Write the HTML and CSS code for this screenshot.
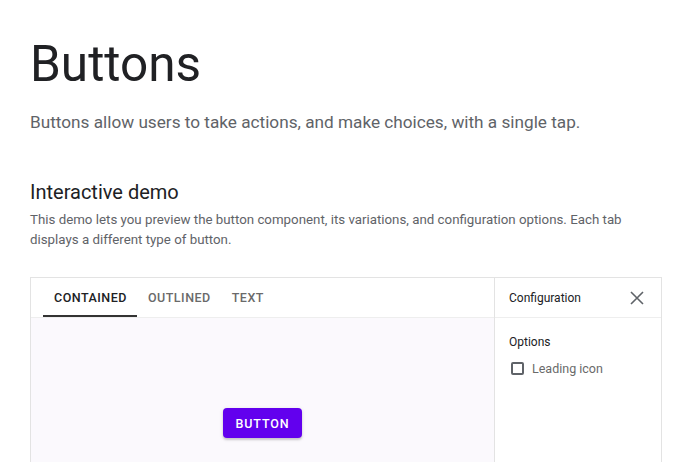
FILE: index.html
```html
<!DOCTYPE html>
<html lang="en">
<head>
<meta charset="utf-8">
<title>Buttons</title>
<link rel="stylesheet" href="styles.css">
</head>
<body>
<main class="page">
  <h1 class="title">Buttons</h1>
  <p class="lead">Buttons allow users to take actions, and make choices, with a single tap.</p>

  <h2 class="section-title">Interactive demo</h2>
  <p class="section-text">This demo lets you preview the button component, its variations, and configuration options. Each tab displays a different type of button.</p>

  <div class="demo">
    <div class="demo-main">
      <nav class="tabs">
        <span class="tab tab-active">Contained</span>
        <span class="tab">Outlined</span>
        <span class="tab">Text</span>
      </nav>
      <div class="stage">
        <button class="btn-contained" type="button">Button</button>
      </div>
    </div>
    <aside class="config">
      <div class="config-head">
        <span>Configuration</span>
        <svg class="close-icon" width="14" height="14" viewBox="0 0 14 14" aria-hidden="true">
          <path d="M1 1 L13 13 M13 1 L1 13" stroke="#5f6368" stroke-width="1.6" fill="none"/>
        </svg>
      </div>
      <div class="config-body">
        <div class="config-label">Options</div>
        <label class="check-row">
          <span class="checkbox"></span>
          <span class="check-text">Leading icon</span>
        </label>
      </div>
    </aside>
  </div>
</main>
</body>
</html>
```
FILE: styles.css
```css
* {
  box-sizing: border-box;
}

body {
  margin: 0;
  background: #ffffff;
  font-family: Roboto, "Liberation Sans", Arial, sans-serif;
  color: #202124;
}

.page {
  padding: 40px 31px 0 30px;
}

.title {
  margin: 0;
  font-size: 49.5px;
  font-weight: 400;
  line-height: 48px;
  color: #202124;
}

.lead {
  margin: 22px 0 0;
  font-size: 17.2px;
  line-height: 24px;
  color: #5f6368;
}

.section-title {
  margin: 44px 0 0;
  font-size: 20px;
  font-weight: 400;
  line-height: 28px;
  color: #202124;
}

.section-text {
  margin: 4px 0 0;
  font-size: 13.3px;
  line-height: 20px;
  color: #5f6368;
}

.demo {
  margin-top: 27px;
  display: flex;
  border: 1px solid #e3e3e3;
  width: 632px;
}

.demo-main {
  flex: 1;
  display: flex;
  flex-direction: column;
}

.tabs {
  display: flex;
  height: 40px;
  padding-left: 12px;
  border-bottom: 1px solid #eeeeee;
}

.tab {
  display: flex;
  align-items: center;
  padding: 0 10px 0 11px;
  font-size: 12.5px;
  font-weight: 500;
  letter-spacing: 0.5px;
  text-transform: uppercase;
  color: #6a6a6a;
}

.tab-active {
  color: #202124;
  border-bottom: 2px solid #333333;
  padding-top: 2px;
}

.stage {
  height: 210px;
  background: #fbf9fd;
  display: flex;
  align-items: center;
  justify-content: center;
}

.btn-contained {
  height: 30px;
  padding: 0 12.5px;
  border: none;
  border-radius: 4px;
  background: #6200ee;
  color: #ffffff;
  font-family: inherit;
  font-size: 12.5px;
  font-weight: 500;
  letter-spacing: 0.9px;
  text-transform: uppercase;
  box-shadow: 0 2px 2px rgba(0, 0, 0, 0.14), 0 1px 4px rgba(0, 0, 0, 0.12);
}

.config {
  width: 167px;
  border-left: 1px solid #e3e3e3;
}

.config-head {
  height: 40px;
  display: flex;
  align-items: center;
  justify-content: space-between;
  padding: 0 17px 0 14px;
  border-bottom: 1px solid #eeeeee;
  font-size: 12px;
  color: #202124;
}

.close-icon {
  display: block;
}

.config-body {
  padding: 16px 14px;
}

.config-label {
  font-size: 12px;
  line-height: 16px;
  color: #202124;
}

.check-row {
  display: flex;
  align-items: center;
  margin-top: 11px;
  gap: 8px;
}

.checkbox {
  width: 13px;
  height: 13px;
  margin-left: 2px;
  border: 2px solid #5f6368;
  border-radius: 2px;
}

.check-text {
  font-size: 12.5px;
  color: #6a6a6a;
}
```
